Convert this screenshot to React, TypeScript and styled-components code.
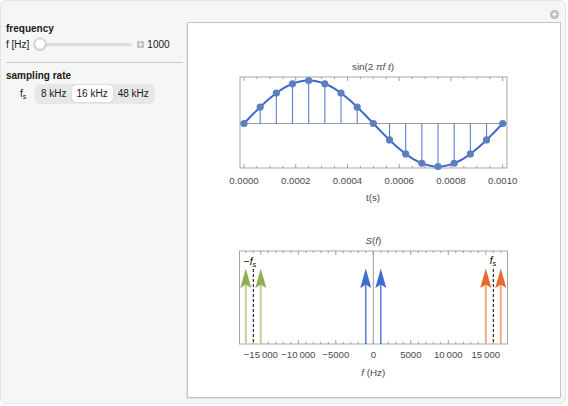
import React from "react";
import styled, { createGlobalStyle } from "styled-components";

const GlobalStyle = createGlobalStyle`
  body {
    margin: 0;
    background: #ffffff;
    font-family: "Liberation Sans", Arial, sans-serif;
  }
`;

const Frame = styled.div`
  position: relative;
  box-sizing: border-box;
  width: 566px;
  height: 404px;
  display: flex;
  background: #f6f6f6;
  border: 1px solid #e3e3e3;
  border-radius: 6px;
`;

const Controls = styled.div`
  box-sizing: border-box;
  width: 186px;
  flex-shrink: 0;
  padding: 22px 4px 0 5px;
  color: #1a1a1a;
  font-size: 10px;
`;

const SectionTitle = styled.div<{ $gap?: number }>`
  font-weight: bold;
  line-height: 12px;
  height: 12px;
  margin-top: ${({ $gap }) => $gap ?? 0}px;
`;

const SliderRow = styled.div`
  display: flex;
  align-items: center;
  height: 14px;
  margin-top: 2px;
`;

const Slider = styled.div`
  position: relative;
  width: 98px;
  height: 14px;
  margin-left: 5px;
`;

const Track = styled.div`
  position: absolute;
  left: 5px;
  right: 0;
  top: 6px;
  height: 3px;
  border-radius: 2px;
  background: #dddddd;
`;

const Knob = styled.div`
  position: absolute;
  left: 0;
  top: 0.5px;
  width: 12px;
  height: 12px;
  box-sizing: border-box;
  border-radius: 50%;
  background: #ffffff;
  border: 0.5px solid #c4c4c4;
  box-shadow: 0 0.5px 1.5px rgba(0, 0, 0, 0.25);
`;

const PlusBox = styled.div`
  width: 7px;
  height: 7px;
  margin-left: 5px;
  border-radius: 1px;
  background: #c2c2c2;
  display: flex;
  align-items: center;
  justify-content: center;
`;

const Value = styled.span`
  margin-left: 3px;
`;

const Separator = styled.div`
  height: 1px;
  background: #c9c9c9;
  margin-top: 10.5px;
`;

const SegmentRow = styled.div`
  display: flex;
  align-items: center;
  height: 20px;
  margin-top: 2px;
  padding-left: 14px;
`;

const SubLabel = styled.span`
  width: 15px;
  font-size: 10px;
  sub {
    font-size: 7px;
    vertical-align: -2px;
  }
`;

const SegmentGroup = styled.div`
  display: flex;
  align-items: center;
  padding: 1px;
  height: 20px;
  box-sizing: border-box;
  border-radius: 5px;
  background: #e7e7e7;
`;

const Segment = styled.div<{ $active?: boolean }>`
  height: 17px;
  line-height: 17px;
  padding: 0 5px;
  font-size: 10px;
  border-radius: 4px;
  background: ${({ $active }) => ($active ? "#ffffff" : "transparent")};
  box-shadow: ${({ $active }) => ($active ? "0 0 1px rgba(0,0,0,0.35)" : "none")};
`;

const AddButton = styled.div`
  position: absolute;
  right: 6px;
  top: 9px;
  width: 9px;
  height: 9px;
  border-radius: 50%;
  background: #bdbdbd;
  display: flex;
  align-items: center;
  justify-content: center;
`;

const Panel = styled.div`
  box-sizing: border-box;
  width: 374px;
  height: 376px;
  margin-top: 21px;
  background: #ffffff;
  border: 1px solid #c6c6c6;
  box-shadow: -1px 1px 0 #e1e1e1;
  display: flex;
  flex-direction: column;
  align-items: center;
  padding-top: 32px;
`;

const Chart = styled.svg<{ $gap?: number }>`
  display: block;
  flex-shrink: 0;
  margin-top: ${({ $gap }) => $gap ?? 0}px;
  font-family: "Liberation Sans", Arial, sans-serif;
`;

const TICK = "#8a8a8a";
const AXIS = "#a6a6a6";
const LABEL = "#4a4a4a";

const tx = (t: number) => 244 + t * 258700;
const vy = (v: number) => 123.5 - 43 * v;

function TimePlot() {
  const curve: string[] = [];
  for (let i = 0; i <= 120; i++) {
    const t = (i / 120) * 0.001;
    curve.push(`${i === 0 ? "M" : "L"}${tx(t).toFixed(2)},${vy(Math.sin(2 * Math.PI * 1000 * t)).toFixed(2)}`);
  }
  const samples = Array.from({ length: 17 }, (_, k) => {
    const t = k / 16000;
    return { x: tx(t), y: vy(Math.sin(2 * Math.PI * 1000 * t)) };
  });
  const ticks = Array.from({ length: 21 }, (_, k) => ({ x: tx(k * 0.00005), major: k % 4 === 0 }));
  const labels = [0, 0.0002, 0.0004, 0.0006, 0.0008, 0.001];

  return (
    <Chart width={320} height={150} viewBox="214 55 320 150">
      <text x={373} y={69.5} textAnchor="middle" fontSize={9.8} fill={LABEL}>
        sin(2 <tspan fontStyle="italic">πf</tspan> <tspan fontStyle="italic">t</tspan>)
      </text>
      <rect x={240} y={77} width={267} height={91} fill="none" stroke={AXIS} strokeWidth={1} />
      {ticks.map((tk, i) => (
        <g key={i} stroke={TICK} strokeWidth={0.8}>
          <line x1={tk.x} x2={tk.x} y1={168} y2={168 - (tk.major ? 4 : 2.2)} />
          <line x1={tk.x} x2={tk.x} y1={77} y2={77 + (tk.major ? 4 : 2.2)} />
        </g>
      ))}
      <line x1={240} x2={507} y1={123.5} y2={123.5} stroke="#9c9c9c" strokeWidth={1} />
      {samples.map((s, i) => (
        <line key={i} x1={s.x} x2={s.x} y1={123.5} y2={s.y} stroke="#3f68c8" strokeOpacity={0.85} strokeWidth={1.1} />
      ))}
      <path d={curve.join(" ")} fill="none" stroke="#3f68cc" strokeWidth={2} />
      {samples.map((s, i) => (
        <circle key={i} cx={s.x} cy={s.y} r={3.6} fill="#5c7fbf" />
      ))}
      {labels.map((t, i) => (
        <text key={i} x={tx(t)} y={183.5} textAnchor="middle" fontSize={9.6} fill={LABEL}>
          {t.toFixed(4)}
        </text>
      ))}
      <text x={373} y={200.5} textAnchor="middle" fontSize={9.8} fill={LABEL}>
        t(s)
      </text>
    </Chart>
  );
}

const fx = (f: number) => 373.3 + f * 0.0075;

function Arrow({ f, head, stem, width }: { f: number; head: string; stem: string; width: number }) {
  const x = fx(f);
  return (
    <g>
      <line x1={x} x2={x} y1={344} y2={283} stroke={stem} strokeWidth={width} />
      <path d={`M${x},268.5 L${x + 5.5},288 L${x},284.5 L${x - 5.5},288 Z`} fill={head} />
    </g>
  );
}

function SpectrumPlot() {
  const ticks = Array.from({ length: 35 }, (_, k) => {
    const f = (k - 17) * 1000;
    return { x: fx(f), major: f % 5000 === 0 };
  });
  const labels: [number, string][] = [
    [-15000, "\u221215\u2009000"],
    [-10000, "\u221210\u2009000"],
    [-5000, "\u22125000"],
    [0, "0"],
    [5000, "5000"],
    [10000, "10\u2009000"],
    [15000, "15\u2009000"],
  ];

  return (
    <Chart $gap={23} width={320} height={157} viewBox="214 228 320 157">
      <text x={373.3} y={243.5} textAnchor="middle" fontSize={9.8} fill={LABEL}>
        <tspan fontStyle="italic">S</tspan>(<tspan fontStyle="italic">f</tspan>)
      </text>
      <rect x={239.5} y={251} width={268} height={93} fill="none" stroke={AXIS} strokeWidth={1} />
      {ticks.map((tk, i) => (
        <g key={i} stroke={TICK} strokeWidth={0.8}>
          <line x1={tk.x} x2={tk.x} y1={344} y2={344 - (tk.major ? 4 : 2.2)} />
          <line x1={tk.x} x2={tk.x} y1={251} y2={251 + (tk.major ? 4 : 2.2)} />
        </g>
      ))}
      <line x1={373.3} x2={373.3} y1={251} y2={344} stroke="#9c9c9c" strokeWidth={1} />
      <line x1={fx(-16000)} x2={fx(-16000)} y1={269} y2={344} stroke="#000" strokeWidth={1} strokeDasharray="3 2" />
      <line x1={fx(16000)} x2={fx(16000)} y1={269} y2={344} stroke="#000" strokeWidth={1} strokeDasharray="3 2" />
      <Arrow f={-17000} head="#8fb04f" stem="#bcd39a" width={2} />
      <Arrow f={-15000} head="#8fb04f" stem="#bcd39a" width={2} />
      <Arrow f={-1000} head="#3f6bd2" stem="#3f6bd2" width={1.3} />
      <Arrow f={1000} head="#3f6bd2" stem="#3f6bd2" width={1.3} />
      <Arrow f={15000} head="#e8692a" stem="#f3ab87" width={2} />
      <Arrow f={17000} head="#e8692a" stem="#f3ab87" width={2} />
      <text x={250} y={264.5} textAnchor="middle" fontSize={10} fill="#000">
        {"\u2212"}
        <tspan fontStyle="italic">f</tspan>
        <tspan fontStyle="italic" fontSize={7.5} dy={2}>s</tspan>
      </text>
      <text x={493} y={264} textAnchor="middle" fontSize={10} fill="#000">
        <tspan fontStyle="italic">f</tspan>
        <tspan fontStyle="italic" fontSize={7.5} dy={2}>s</tspan>
      </text>
      {labels.map(([f, s]) => (
        <text key={f} x={fx(f)} y={357.5} textAnchor="middle" fontSize={9.6} fill={LABEL}>
          {s}
        </text>
      ))}
      <text x={373.3} y={375.5} textAnchor="middle" fontSize={9.8} fill={LABEL}>
        <tspan fontStyle="italic">f</tspan> (Hz)
      </text>
    </Chart>
  );
}

export default function App() {
  return (
    <>
      <GlobalStyle />
      <Frame>
        <Controls>
          <SectionTitle>frequency</SectionTitle>
          <SliderRow>
            <span>f [Hz]</span>
            <Slider>
              <Track />
              <Knob />
            </Slider>
            <PlusBox>
              <svg width={5} height={5} viewBox="0 0 5 5">
                <path d="M2.5 0.5v4M0.5 2.5h4" stroke="#fff" strokeWidth={1.2} />
              </svg>
            </PlusBox>
            <Value>1000</Value>
          </SliderRow>
          <Separator />
          <SectionTitle $gap={7}>sampling rate</SectionTitle>
          <SegmentRow>
            <SubLabel>
              f<sub>s</sub>
            </SubLabel>
            <SegmentGroup>
              <Segment>8 kHz</Segment>
              <Segment $active>16 kHz</Segment>
              <Segment>48 kHz</Segment>
            </SegmentGroup>
          </SegmentRow>
        </Controls>
        <Panel>
          <TimePlot />
          <SpectrumPlot />
        </Panel>
        <AddButton>
          <svg width={7} height={7} viewBox="0 0 7 7">
            <path d="M3.5 1.2v4.6M1.2 3.5h4.6" stroke="#fff" strokeWidth={1.4} />
          </svg>
        </AddButton>
      </Frame>
    </>
  );
}
